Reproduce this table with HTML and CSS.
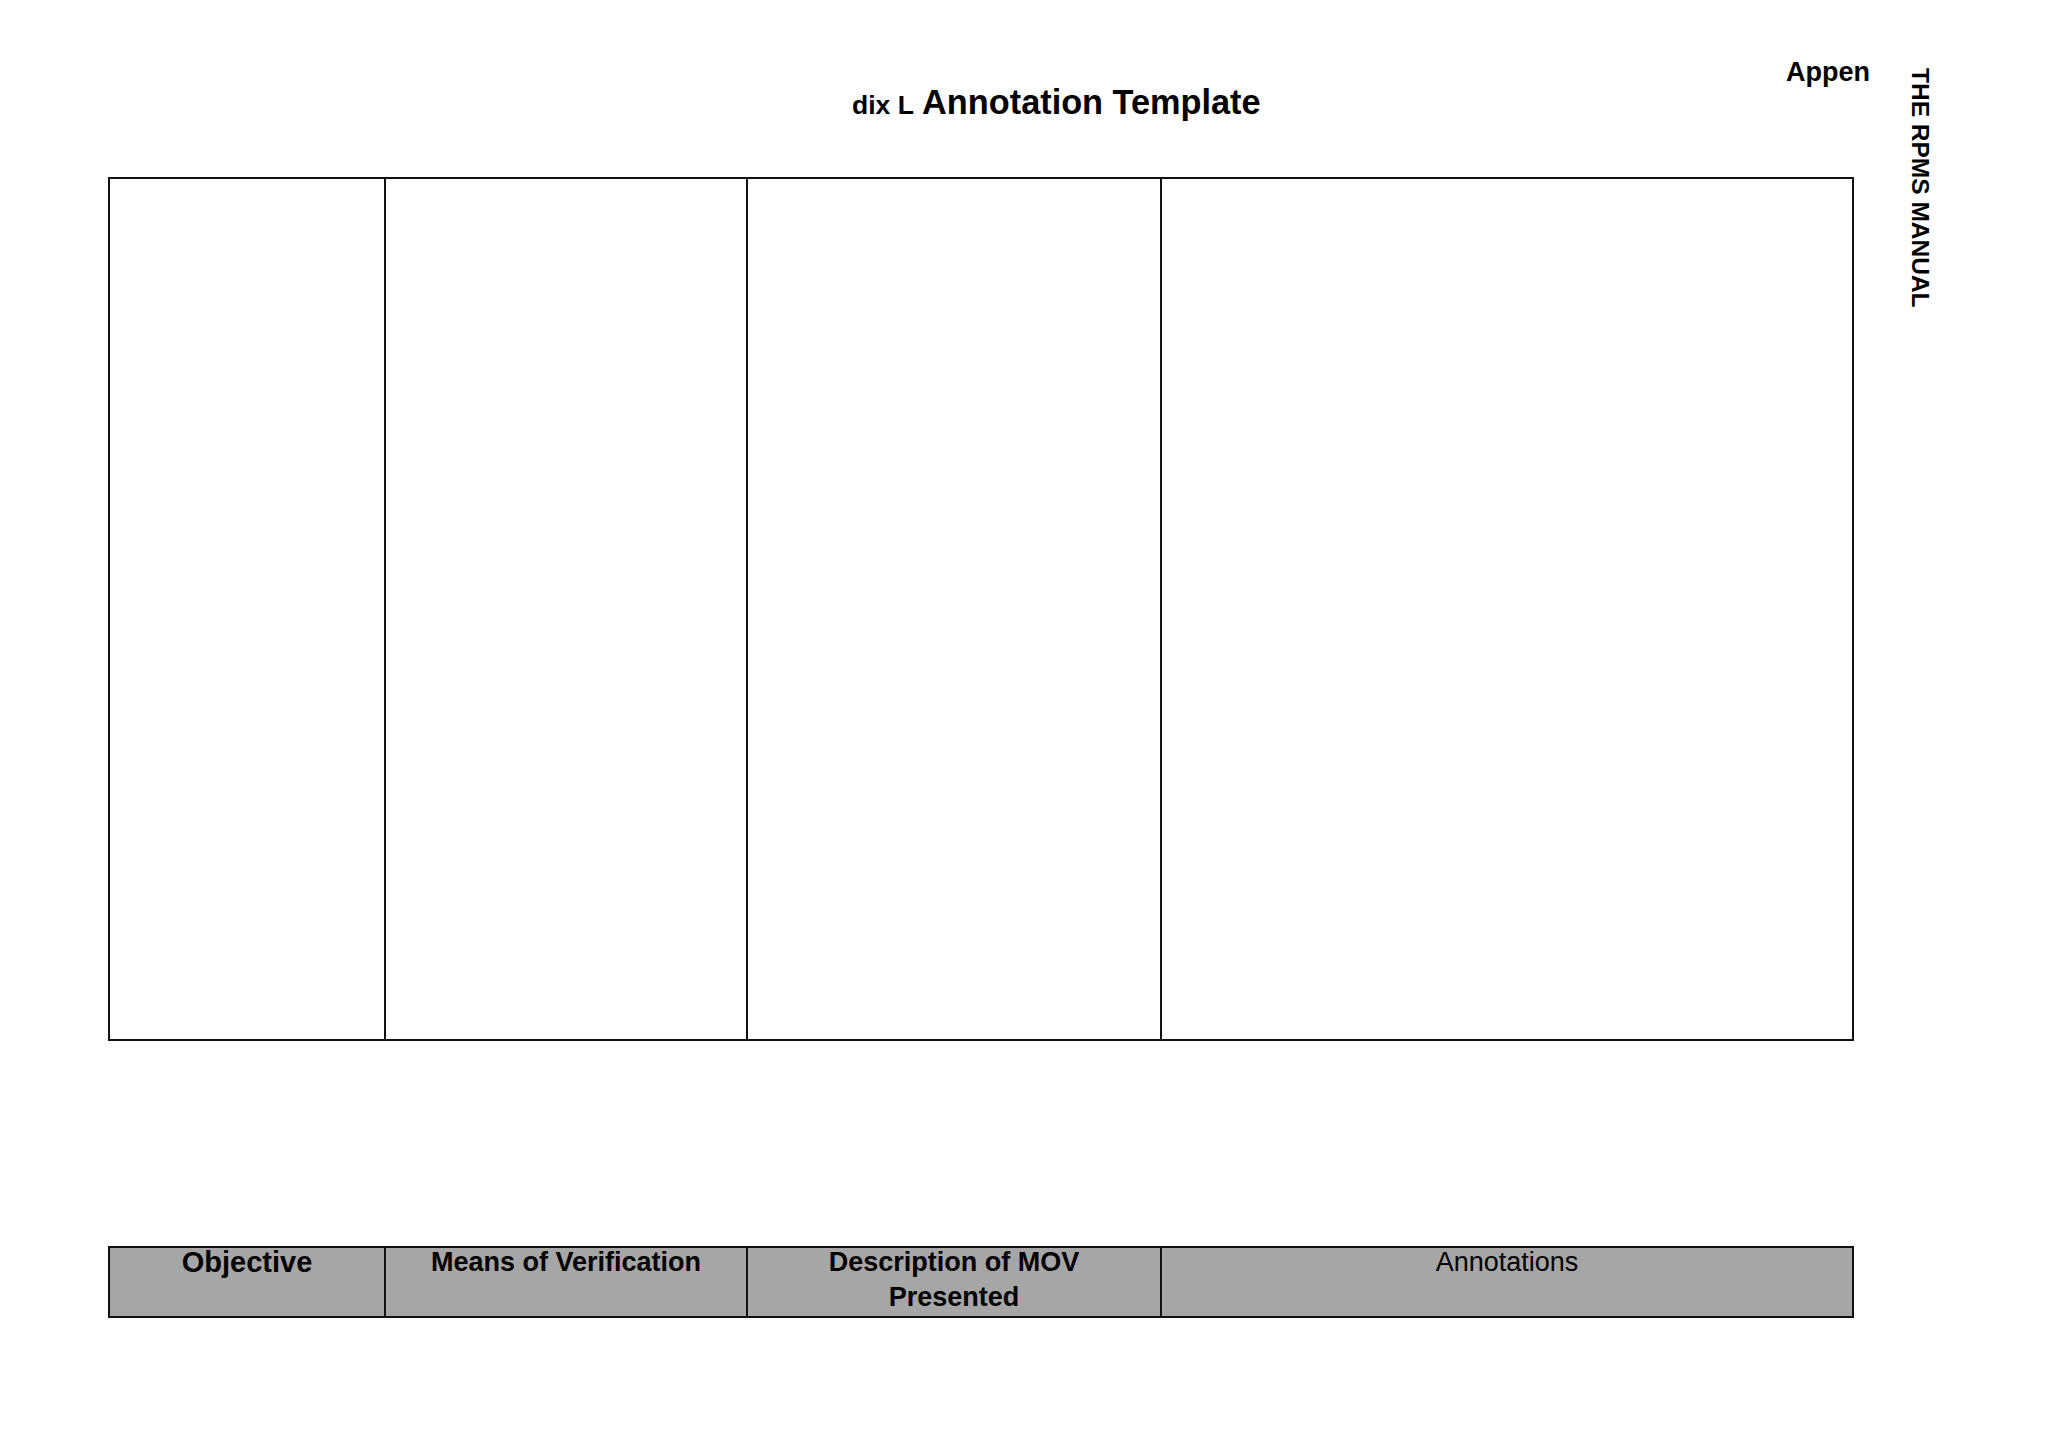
FILE: index.html
```html
<!DOCTYPE html>
<html lang="en">
<head>
<meta charset="utf-8">
<title>Appendix L Annotation Template</title>
<link rel="stylesheet" href="styles.css">
</head>
<body>
<div class="page">
  <div class="main">
    <div class="appen">Appen</div>
    <h1 class="title"><span class="title-small">dix L</span> Annotation Template</h1>
    <div class="grid grid-body">
      <div class="cell"></div>
      <div class="cell"></div>
      <div class="cell"></div>
      <div class="cell"></div>
    </div>
    <div class="grid grid-head">
      <div class="cell head head-big"><span class="label">Objective</span></div>
      <div class="cell head"><span class="label">Means of Verification</span></div>
      <div class="cell head"><span class="label">Description of MOV<br>Presented</span></div>
      <div class="cell head head-normal"><span class="label">Annotations</span></div>
    </div>
  </div>
  <div class="side">THE RPMS MANUAL</div>
</div>
</body>
</html>
```

FILE: styles.css
```css
html, body {
  margin: 0;
  padding: 0;
  background: #ffffff;
}

body {
  font-family: "Liberation Sans", Arial, sans-serif;
  color: #000000;
  width: 2048px;
  height: 1448px;
  overflow: hidden;
}

.page {
  display: flex;
  align-items: flex-start;
  padding-left: 108px;
}

.main {
  width: 1762px;
  display: flex;
  flex-direction: column;
}

.appen {
  margin-top: 59px;
  text-align: right;
  font-weight: bold;
  font-size: 27px;
  line-height: 26px;
}

.title {
  margin: 0;
  padding-left: 744px;
  font-size: 34.3px;
  font-weight: bold;
  line-height: 34px;
}

.title-small {
  font-size: 26.5px;
}

.grid {
  display: grid;
  grid-template-columns: 274px 362px 414px 692px;
  width: 1746px;
  box-sizing: border-box;
  border: 2px solid #111111;
}

.grid-body {
  margin-top: 55px;
  height: 864px;
}

.grid-head {
  margin-top: 205px;
  height: 72px;
  background: #a6a6a6;
}

.cell {
  box-sizing: border-box;
  border-left: 2px solid #111111;
}

.cell:first-child {
  border-left: none;
}

.head {
  text-align: center;
  font-weight: bold;
  font-size: 27px;
  line-height: 35px;
}

.label {
  display: block;
  margin-top: -3px;
}

.head-big {
  font-size: 29px;
}

.head-normal {
  font-weight: normal;
}

.side {
  margin-left: 37px;
  padding-top: 68px;
  writing-mode: vertical-rl;
  font-weight: bold;
  font-size: 24.5px;
  line-height: 27px;
  white-space: nowrap;
}
```
